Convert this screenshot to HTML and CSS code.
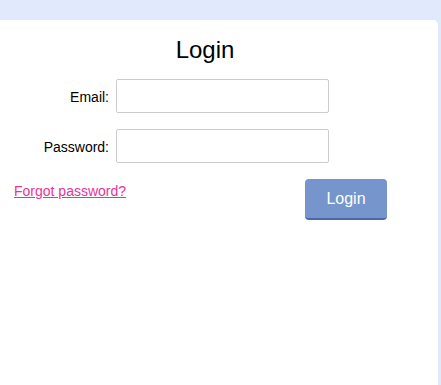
FILE: index.html
```html
<!DOCTYPE html>
<html>
<head>
<meta charset="utf-8">
<link rel="stylesheet" href="styles.css">
</head>
<body>
<div class="card">
  <h1 class="title">Login</h1>
  <form class="form">
    <div class="fields">
      <label class="label" for="email">Email:</label>
      <input class="input" id="email" type="text">
      <label class="label" for="password">Password:</label>
      <input class="input" id="password" type="password">
    </div>
    <div class="actions">
      <a class="forgot" href="#">Forgot password?</a>
      <button class="btn" type="button">Login</button>
    </div>
  </form>
</div>
</body>
</html>
```

FILE: styles.css
```css
html, body {
  margin: 0;
  padding: 0;
  height: 100%;
}
body {
  background: #e0eafc;
  font-family: "Liberation Sans", Arial, sans-serif;
  color: #000;
  overflow: hidden;
}
.card {
  margin-top: 20px;
  width: 438px;
  height: calc(100% - 20px);
  background: #fff;
  border-top-right-radius: 5px;
  padding-top: 16px;
  box-sizing: border-box;
}
.title {
  width: 410px;
  margin: 0;
  text-align: center;
  font-size: 24px;
  font-weight: normal;
  line-height: 28px;
}
.form {
  margin: 15px 0 0 0;
}
.fields {
  display: grid;
  grid-template-columns: 109px 213px;
  column-gap: 7px;
  row-gap: 16px;
  align-items: center;
}
.label {
  text-align: right;
  font-size: 14px;
  line-height: 16px;
  padding-top: 2px;
}
.input {
  box-sizing: border-box;
  width: 213px;
  height: 34px;
  margin: 0;
  border: 1px solid #cccccc;
  border-radius: 2px;
  background: #fff;
  padding: 0 6px;
  font-family: inherit;
  font-size: 14px;
}
.actions {
  display: flex;
  justify-content: space-between;
  align-items: flex-start;
  width: 373px;
  margin: 16px 0 0 14px;
}
.forgot {
  margin-top: 4px;
  font-size: 14px;
  line-height: 16px;
  color: #e8339a;
  text-decoration: underline;
}
.btn {
  box-sizing: border-box;
  width: 82px;
  height: 41px;
  margin: 0;
  border: none;
  border-bottom: 2px solid #4c6ba3;
  border-radius: 4px;
  background: #7595cc;
  color: #fff;
  font-family: inherit;
  font-size: 16px;
  padding: 0;
}
```
